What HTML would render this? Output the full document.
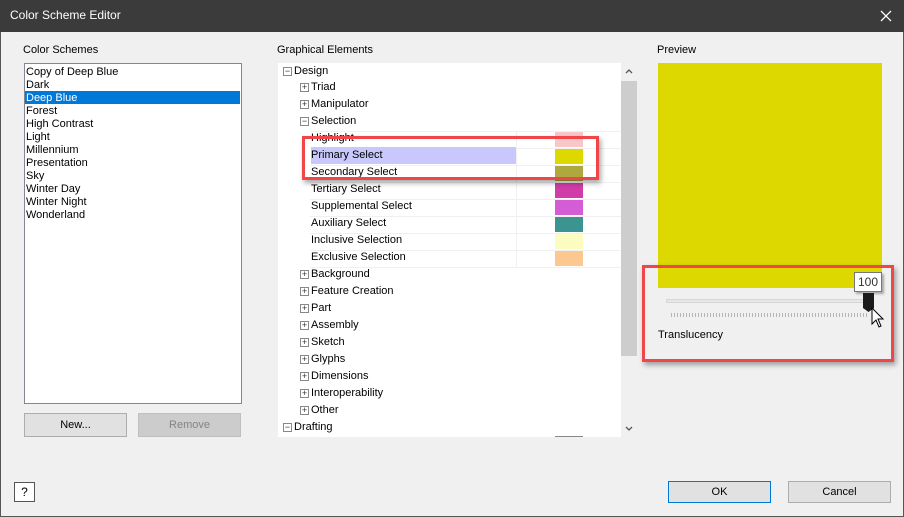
<!DOCTYPE html>
<html><head><style>
*{margin:0;padding:0;box-sizing:border-box}
body{width:904px;height:517px;background:#f0f0f0;font-family:"Liberation Sans",sans-serif;font-size:11px;color:#000;position:relative;overflow:hidden}
.a{position:absolute}
.t{position:absolute;white-space:nowrap;line-height:13px}
.row{position:absolute;left:0;height:17px;line-height:17px;white-space:nowrap}
.pm{position:absolute;width:9px;height:9px;border:1px solid #888;background:#fff;font-size:9px;line-height:7px;text-align:center;color:#333}
.sw{position:absolute;left:277px;width:28px;height:15px}
.btn{position:absolute;height:24px;border:1px solid #adadad;background:#e1e1e1;text-align:center;line-height:22px}
.line{position:absolute;left:32px;right:16px;height:1px;background:#f0f0f0}
.sub .row{margin-top:-1px}
.sub .pm{margin-top:-1px}
</style></head><body>
<div class="a" style="left:0;top:0;width:904px;height:517px;border:1px solid #555"></div>
<div class="a" style="left:0;top:0;width:904px;height:32px;background:#3b3b3b"></div>
<div class="t" style="left:10px;top:9px;color:#fff;font-size:12px">Color Scheme Editor</div>
<svg class="a" style="left:880px;top:10px" width="12" height="12"><path d="M1 1L11 11M11 1L1 11" stroke="#fff" stroke-width="1.3"/></svg>

<div class="t" style="left:23px;top:44px">Color Schemes</div>
<div class="a" style="left:24px;top:63px;width:218px;height:341px;background:#fff;border:1px solid #828790"></div>
<div class="a" style="left:25px;top:91px;width:215px;height:13px;background:#0078d7"></div>
<div class="t" style="left:26px;top:66px">Copy of Deep Blue<br>Dark<br><span style="color:#fff">Deep Blue</span><br>Forest<br>High Contrast<br>Light<br>Millennium<br>Presentation<br>Sky<br>Winter Day<br>Winter Night<br>Wonderland</div>
<div class="btn" style="left:24px;top:413px;width:103px">New...</div>
<div class="btn" style="left:138px;top:413px;width:103px;color:#838383;border-color:#bfbfbf;background:#cccccc">Remove</div>

<div class="t" style="left:277px;top:44px">Graphical Elements</div>
<div class="a" style="left:278px;top:63px;width:359px;height:374px;background:#fff;overflow:hidden">
 <div class="a" style="left:343px;top:0;width:16px;height:374px;background:#f0f0f0"></div>
 <div class="a" style="left:343px;top:18px;width:16px;height:275px;background:#cdcdcd"></div>
 <svg class="a" style="left:347px;top:5px" width="8" height="6"><path d="M1 5L4 2L7 5" stroke="#555" fill="none" stroke-width="1.3"/></svg>
 <svg class="a" style="left:347px;top:363px" width="8" height="6"><path d="M1 1L4 4L7 1" stroke="#555" fill="none" stroke-width="1.3"/></svg>
 <div class="a" style="left:238px;top:68px;width:1px;height:136px;background:#f0f0f0"></div>
 <div class="line" style="top:68px"></div><div class="line" style="top:85px"></div><div class="line" style="top:102px"></div><div class="line" style="top:119px"></div><div class="line" style="top:136px"></div><div class="line" style="top:153px"></div><div class="line" style="top:170px"></div><div class="line" style="top:187px"></div><div class="line" style="top:204px"></div>
 <div class="a" style="left:33px;top:84px;width:205px;height:17px;background:#c8c8fc"></div>
 <div class="sw" style="top:69px;background:#f8c8c8"></div>
 <div class="sw" style="top:86px;background:#dcd800"></div>
 <div class="sw" style="top:103px;background:#aea83e"></div>
 <div class="sw" style="top:120px;background:#d03ca8"></div>
 <div class="sw" style="top:137px;background:#d45cd4"></div>
 <div class="sw" style="top:154px;background:#3c9490"></div>
 <div class="sw" style="top:171px;background:#fcfcc0"></div>
 <div class="sw" style="top:188px;background:#fcc890"></div>
 <div class="sw" style="top:373px;height:2px;background:#888"></div>
 <div class="pm" style="left:5px;top:4px">−</div><div class="row" style="left:16px;top:0">Design</div>
 <div class="sub">
 <div class="pm" style="left:22px;top:21px">+</div><div class="row" style="left:33px;top:17px">Triad</div>
 <div class="pm" style="left:22px;top:38px">+</div><div class="row" style="left:33px;top:34px">Manipulator</div>
 <div class="pm" style="left:22px;top:55px">−</div><div class="row" style="left:33px;top:51px">Selection</div>
 <div class="row" style="left:33px;top:68px">Highlight</div>
 <div class="row" style="left:33px;top:85px">Primary Select</div>
 <div class="row" style="left:33px;top:102px">Secondary Select</div>
 <div class="row" style="left:33px;top:119px">Tertiary Select</div>
 <div class="row" style="left:33px;top:136px">Supplemental Select</div>
 <div class="row" style="left:33px;top:153px">Auxiliary Select</div>
 <div class="row" style="left:33px;top:170px">Inclusive Selection</div>
 <div class="row" style="left:33px;top:187px">Exclusive Selection</div>
 <div class="pm" style="left:22px;top:208px">+</div><div class="row" style="left:33px;top:204px">Background</div>
 <div class="pm" style="left:22px;top:225px">+</div><div class="row" style="left:33px;top:221px">Feature Creation</div>
 <div class="pm" style="left:22px;top:242px">+</div><div class="row" style="left:33px;top:238px">Part</div>
 <div class="pm" style="left:22px;top:259px">+</div><div class="row" style="left:33px;top:255px">Assembly</div>
 <div class="pm" style="left:22px;top:276px">+</div><div class="row" style="left:33px;top:272px">Sketch</div>
 <div class="pm" style="left:22px;top:293px">+</div><div class="row" style="left:33px;top:289px">Glyphs</div>
 <div class="pm" style="left:22px;top:310px">+</div><div class="row" style="left:33px;top:306px">Dimensions</div>
 <div class="pm" style="left:22px;top:327px">+</div><div class="row" style="left:33px;top:323px">Interoperability</div>
 <div class="pm" style="left:22px;top:344px">+</div><div class="row" style="left:33px;top:340px">Other</div>
 <div class="pm" style="left:5px;top:361px">−</div><div class="row" style="left:16px;top:357px">Drafting</div>
 </div>
</div>
<div class="a" style="left:302px;top:136px;width:297px;height:44px;border:3px solid #f0464a;box-shadow:2px 3px 5px rgba(0,0,0,.35)"></div>

<div class="t" style="left:657px;top:44px">Preview</div>
<div class="a" style="left:658px;top:63px;width:224px;height:225px;background:#dcd800"></div>
<div class="a" style="left:642px;top:265px;width:252px;height:97px;border:3px solid #f0464a;box-shadow:2px 3px 5px rgba(0,0,0,.35)"></div>
<div class="a" style="left:666px;top:299px;width:206px;height:4px;border:1px solid #d6d6d6;background:#e7e7e7"></div>
<div class="a" style="left:671px;top:313px;width:198px;height:4px;background:repeating-linear-gradient(90deg,#b5b5b5 0 1px,transparent 1px 3px)"></div>
<div class="a" style="left:854px;top:272px;width:28px;height:20px;background:#fff;border:1px solid #777;box-shadow:2px 2px 2px rgba(0,0,0,.3);text-align:center;line-height:18px;color:#333;font-size:12px">100</div>
<svg class="a" style="left:862px;top:292px" width="30" height="40"><path d="M1 1H12V16L6.5 20L1 16Z" fill="#1a1a1a"/><path d="M10 16V32L14 28L17 35L19 34L16 27H21Z" fill="#fff" stroke="#000" stroke-width="1"/></svg>
<div class="t" style="left:658px;top:329px;font-size:11px">Translucency</div>

<div class="a" style="left:14px;top:482px;width:21px;height:20px;border:1px solid #555;background:#fff;text-align:center;line-height:18px;font-size:12px">?</div>
<div class="btn" style="left:668px;top:481px;width:103px;height:22px;line-height:20px;border:1px solid #0078d7">OK</div>
<div class="btn" style="left:788px;top:481px;width:103px;height:22px;line-height:20px">Cancel</div>
</body></html>
